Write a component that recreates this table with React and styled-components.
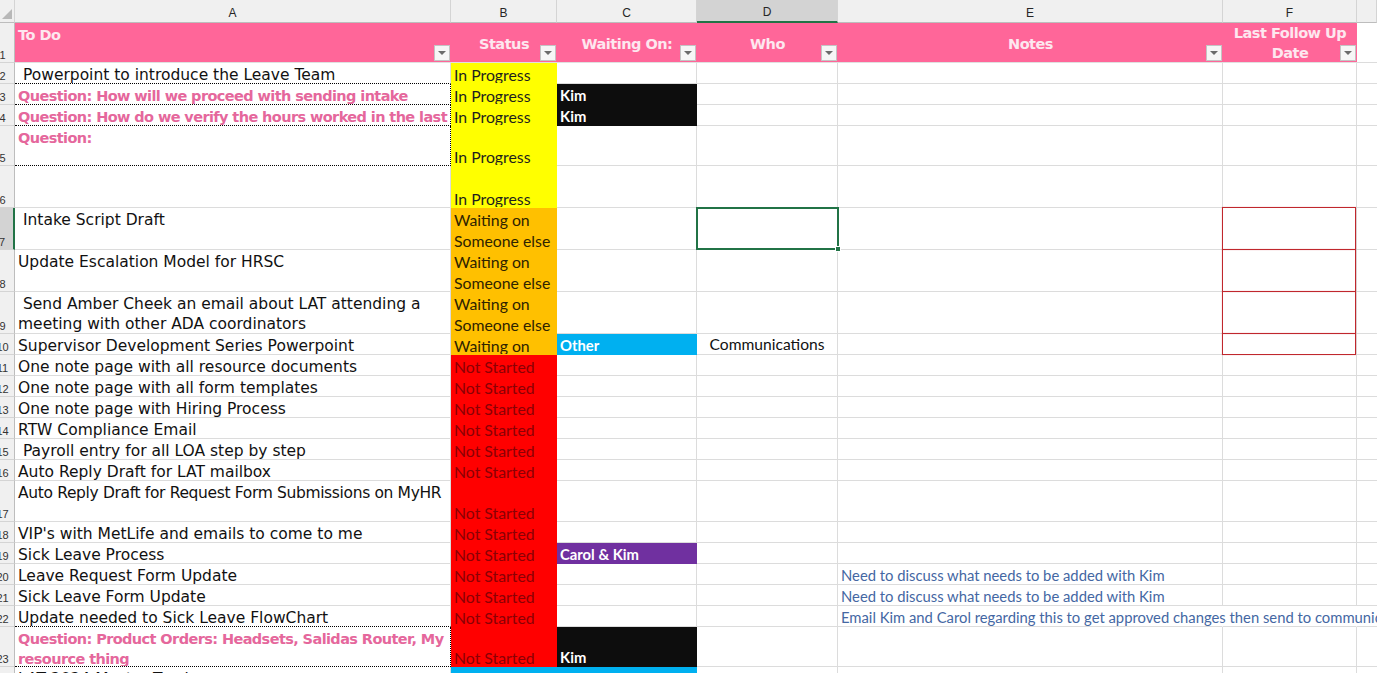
import React from "react";
import styled, { createGlobalStyle, css } from "styled-components";

const GRID = "#dcdcdc";
const GOTHIC = `"DejaVu Sans", "Liberation Sans", sans-serif`;
const CALIBRI = `Lato, "Liberation Sans", sans-serif`;
const COLS = "15px 436px 106px 140px 141px 385px 134px 1fr";

const GlobalStyle = createGlobalStyle`
  html, body {
    margin: 0;
    padding: 0;
    background: #fff;
    overflow: hidden;
  }
`;

const Sheet = styled.div`
  width: 1377px;
  height: 673px;
  overflow: hidden;
  background: #fff;
  font-family: ${CALIBRI};
`;

const Row = styled.div`
  display: grid;
  grid-template-columns: ${COLS};
  grid-template-rows: ${(p) => p.$h}px;
  height: ${(p) => p.$h}px;
`;

const ColHead = styled.div`
  box-sizing: border-box;
  display: flex;
  align-items: center;
  justify-content: center;
  background: ${(p) => (p.$active ? "#d3d3d3" : "#f0f0f0")};
  border-right: 1px solid #d4d4d4;
  border-bottom: ${(p) => (p.$active ? "2px solid #217346" : "1px solid #bdbdbd")};
  font-family: "Liberation Sans", sans-serif;
  font-size: 12px;
  color: #262626;
  padding-top: 3px;
`;

const Corner = styled.div`
  box-sizing: border-box;
  background: #f0f0f0;
  border-bottom: 1px solid #bdbdbd;
  border-right: 1px solid #d4d4d4;
  display: flex;
  align-items: flex-end;
  justify-content: flex-end;
  padding: 0 2px 3px 0;
`;

const CornerTriangle = styled.div`
  width: 0;
  height: 0;
  border-left: 10px solid transparent;
  border-bottom: 10px solid #b8b8b8;
`;

const RowNum = styled.div`
  box-sizing: border-box;
  display: flex;
  align-items: flex-end;
  justify-content: center;
  overflow: hidden;
  padding: 0 9px 1px 0;
  background: ${(p) => (p.$active ? "#d3d3d3" : "#f0f0f0")};
  border-bottom: 1px solid #d4d4d4;
  border-right: ${(p) => (p.$active ? "2px solid #217346" : "1px solid #bdbdbd")};
  font-family: "Liberation Sans", sans-serif;
  font-size: 11px;
  color: #333;
  white-space: nowrap;
`;

const HeadCell = styled.div`
  position: relative;
  box-sizing: border-box;
  display: flex;
  overflow: hidden;
  background: #ff6699;
  border-bottom: 1px solid #e0e0e0;
  color: #fde7ef;
  font-family: ${GOTHIC};
  font-weight: bold;
  font-size: 14.5px;
  letter-spacing: -0.5px;
  line-height: 20px;
  ${(p) =>
    p.$top
      ? css`
          align-items: flex-start;
          padding: 2px 0 0 3px;
        `
      : css`
          align-items: center;
          justify-content: center;
          text-align: center;
          padding: ${p.$twoLine ? "0 2px" : "2px 2px 0"};
        `}
`;

const FilterButton = styled.div`
  position: absolute;
  right: 1px;
  bottom: 1px;
  width: 16px;
  height: 16px;
  box-sizing: border-box;
  background: #f6f6f6;
  border: 1px solid #c4c4c4;
  display: flex;
  align-items: center;
  justify-content: center;

  &::after {
    content: "";
    width: 0;
    height: 0;
    border-left: 4px solid transparent;
    border-right: 4px solid transparent;
    border-top: 4px solid #6b6b6b;
  }
`;

const TaskCell = styled.div`
  box-sizing: border-box;
  padding: 2px 0 0 3px;
  font-family: ${GOTHIC};
  font-size: ${(p) => (p.$question ? "14.5px" : "15.5px")};
  line-height: 20px;
  color: ${(p) => (p.$question ? "#e5679c" : "#111")};
  font-weight: ${(p) => (p.$question ? "bold" : "normal")};
  letter-spacing: ${(p) => (p.$question ? "-0.6px" : p.$tight ? "-0.35px" : "0")};
  white-space: ${(p) => (p.$wrap ? "pre-wrap" : "pre")};
  overflow: hidden;
  border-right: 1px ${(p) => (p.$dotted ? "dotted #000" : `solid ${GRID}`)};
  border-bottom: 1px ${(p) => (p.$dotted || p.$dotBottom ? "dotted #000" : `solid ${GRID}`)};
`;

const STATUS = {
  progress: { bg: "#ffff00", fg: "#1e1e1e" },
  waiting: { bg: "#ffc000", fg: "#2e2300" },
  notStarted: { bg: "#ff0000", fg: "#8a0005" },
  blue: { bg: "#00b0f0", fg: "#fff" },
};

const StatusCell = styled.div`
  box-sizing: border-box;
  display: flex;
  align-items: flex-end;
  padding: 0 2px 0 3px;
  background: ${(p) => STATUS[p.$kind].bg};
  color: ${(p) => STATUS[p.$kind].fg};
  border-right: 1px solid ${(p) => STATUS[p.$kind].bg};
  border-bottom: 1px solid ${(p) => STATUS[p.$kind].bg};
  font-size: 15.8px;
  line-height: 21px;
  overflow: hidden;

  span {
    margin-bottom: -2px;
  }
`;

const TagCell = styled.div`
  box-sizing: border-box;
  display: flex;
  align-items: flex-end;
  padding: 0 3px 0;
  background: ${(p) => p.$fill || "transparent"};
  border-right: 1px solid ${(p) => p.$fill || GRID};
  border-bottom: 1px solid ${(p) => p.$fill || GRID};
  color: #fff;
  font-weight: bold;
  font-size: 14.8px;
  line-height: 20px;

  span {
    margin-bottom: -1px;
  }
`;

const WhoCell = styled.div`
  position: relative;
  box-sizing: border-box;
  display: flex;
  align-items: flex-end;
  justify-content: center;
  border-right: 1px solid ${GRID};
  border-bottom: 1px solid ${GRID};
  color: #111;
  font-size: 15.6px;
  line-height: 20px;

  ${(p) =>
    p.$selected &&
    css`
      &::after {
        content: "";
        position: absolute;
        left: -1px;
        top: -1px;
        right: -2px;
        bottom: -1px;
        border: 2px solid #217346;
      }
      &::before {
        content: "";
        position: absolute;
        right: -4px;
        bottom: -3px;
        width: 6px;
        height: 6px;
        background: #217346;
        border: 1px solid #fff;
        box-sizing: border-box;
        z-index: 2;
      }
    `}
`;

const NoteCell = styled.div`
  box-sizing: border-box;
  display: flex;
  align-items: flex-end;
  padding: 0 3px 0;
  border-right: 1px solid ${(p) => (p.$spill ? "transparent" : GRID)};
  border-bottom: 1px solid ${GRID};
  color: #4467a3;
  font-size: 14.8px;
  line-height: 20px;
  white-space: nowrap;
  overflow: visible;

  span {
    margin-bottom: -1px;
  }
`;

const DateCell = styled.div`
  position: relative;
  box-sizing: border-box;
  border-right: 1px solid ${(p) => (p.$spill ? "transparent" : GRID)};
  border-bottom: 1px solid ${GRID};

  ${(p) =>
    p.$flag &&
    css`
      &::after {
        content: "";
        position: absolute;
        left: -1px;
        top: -1px;
        right: 0;
        bottom: -1px;
        border: 1px solid #c0272d;
        box-shadow: 0 0 1px rgba(192, 39, 45, 0.4);
      }
    `}
`;

const EmptyCell = styled.div`
  box-sizing: border-box;
  border-bottom: 1px solid ${GRID};
`;

const headers = [
  { label: "To Do", top: true },
  { label: "Status" },
  { label: "Waiting On:" },
  { label: "Who" },
  { label: "Notes" },
  { label: "Last Follow Up Date", twoLine: true },
];

const NOTE_KIM = "Need to discuss what needs to be added with Kim";

const rows = [
  { n: 2, h: 21, task: " Powerpoint to introduce the Leave Team", status: "progress", dotBottom: true },
  { n: 3, h: 21, task: "Question: How will we proceed with sending intake", q: true, status: "progress", tag: { text: "Kim", fill: "#0d0d0d" } },
  { n: 4, h: 21, task: "Question: How do we verify the hours worked in the last", q: true, status: "progress", tag: { text: "Kim", fill: "#0d0d0d" } },
  { n: 5, h: 40, task: "Question:", q: true, status: "progress" },
  { n: 6, h: 42, task: "", status: "progress" },
  { n: 7, h: 42, task: " Intake Script Draft", status: "waiting", statusText: "Waiting on Someone else", selected: true, flag: true },
  { n: 8, h: 42, task: "Update Escalation Model for HRSC", status: "waiting", statusText: "Waiting on Someone else", flag: true },
  { n: 9, h: 42, wrap: true, task: " Send Amber Cheek an email about LAT attending a meeting with other ADA coordinators", status: "waiting", statusText: "Waiting on Someone else", flag: true },
  { n: 10, h: 21, task: "Supervisor Development Series Powerpoint", status: "waiting", statusText: "Waiting on", tag: { text: "Other", fill: "#00b0f0" }, who: "Communications", flag: true },
  { n: 11, h: 21, task: "One note page with all resource documents", status: "notStarted" },
  { n: 12, h: 21, task: "One note page with all form templates", status: "notStarted" },
  { n: 13, h: 21, task: "One note page with Hiring Process", status: "notStarted" },
  { n: 14, h: 21, task: "RTW Compliance Email", status: "notStarted" },
  { n: 15, h: 21, task: " Payroll entry for all LOA step by step", status: "notStarted" },
  { n: 16, h: 21, task: "Auto Reply Draft for LAT mailbox", status: "notStarted" },
  { n: 17, h: 41, tight: true, task: "Auto Reply Draft for Request Form Submissions on MyHR", status: "notStarted" },
  { n: 18, h: 21, task: "VIP's with MetLife and emails to come to me", status: "notStarted" },
  { n: 19, h: 21, task: "Sick Leave Process", status: "notStarted", tag: { text: "Carol & Kim", fill: "#7030a0" } },
  { n: 20, h: 21, task: "Leave Request Form Update", status: "notStarted", note: NOTE_KIM },
  { n: 21, h: 21, task: "Sick Leave Form Update", status: "notStarted", note: NOTE_KIM },
  { n: 22, h: 21, task: "Update needed to Sick Leave FlowChart", status: "notStarted", dotBottom: true, spill: true, note: "Email Kim and Carol regarding this to get approved changes then send to communications for review" },
  { n: 23, h: 40, wrap: true, task: "Question: Product Orders: Headsets, Salidas Router, My resource thing", q: true, status: "notStarted", tag: { text: "Kim", fill: "#0d0d0d" } },
  { n: 24, h: 21, task: "LAT 2024 Master Tracker", status: "blue", statusText: "", tag: { text: "", fill: "#00b0f0" } },
];

const statusLabel = {
  progress: "In Progress",
  waiting: "Waiting on Someone else",
  notStarted: "Not Started",
  blue: "",
};

const App = () => {
  return (
    <Sheet>
      <GlobalStyle />
      <Row $h={23}>
        <Corner>
          <CornerTriangle />
        </Corner>
        {["A", "B", "C", "D", "E", "F"].map((l) => (
          <ColHead key={l} $active={l === "D"}>
            {l}
          </ColHead>
        ))}
        <ColHead />
      </Row>

      <Row $h={40}>
        <RowNum>1</RowNum>
        {headers.map((h) => (
          <HeadCell key={h.label} $top={h.top} $twoLine={h.twoLine}>
            {h.label}
            <FilterButton />
          </HeadCell>
        ))}
        <EmptyCell />
      </Row>

      {rows.map((r) => (
        <Row key={r.n} $h={r.h}>
          <RowNum $active={r.selected}>{r.n}</RowNum>
          <TaskCell
            $question={r.q}
            $dotted={r.q}
            $dotBottom={r.dotBottom}
            $wrap={r.wrap}
            $tight={r.tight}
          >
            {r.task}
          </TaskCell>
          <StatusCell $kind={r.status}>
            <span>{r.statusText !== undefined ? r.statusText : statusLabel[r.status]}</span>
          </StatusCell>
          <TagCell $fill={r.tag && r.tag.fill}>
            <span>{r.tag && r.tag.text}</span>
          </TagCell>
          <WhoCell $selected={r.selected}>{r.who}</WhoCell>
          <NoteCell $spill={r.spill}>
            <span>{r.note}</span>
          </NoteCell>
          <DateCell $flag={r.flag} $spill={r.spill} />
          <EmptyCell />
        </Row>
      ))}
    </Sheet>
  );
};

export default App;
